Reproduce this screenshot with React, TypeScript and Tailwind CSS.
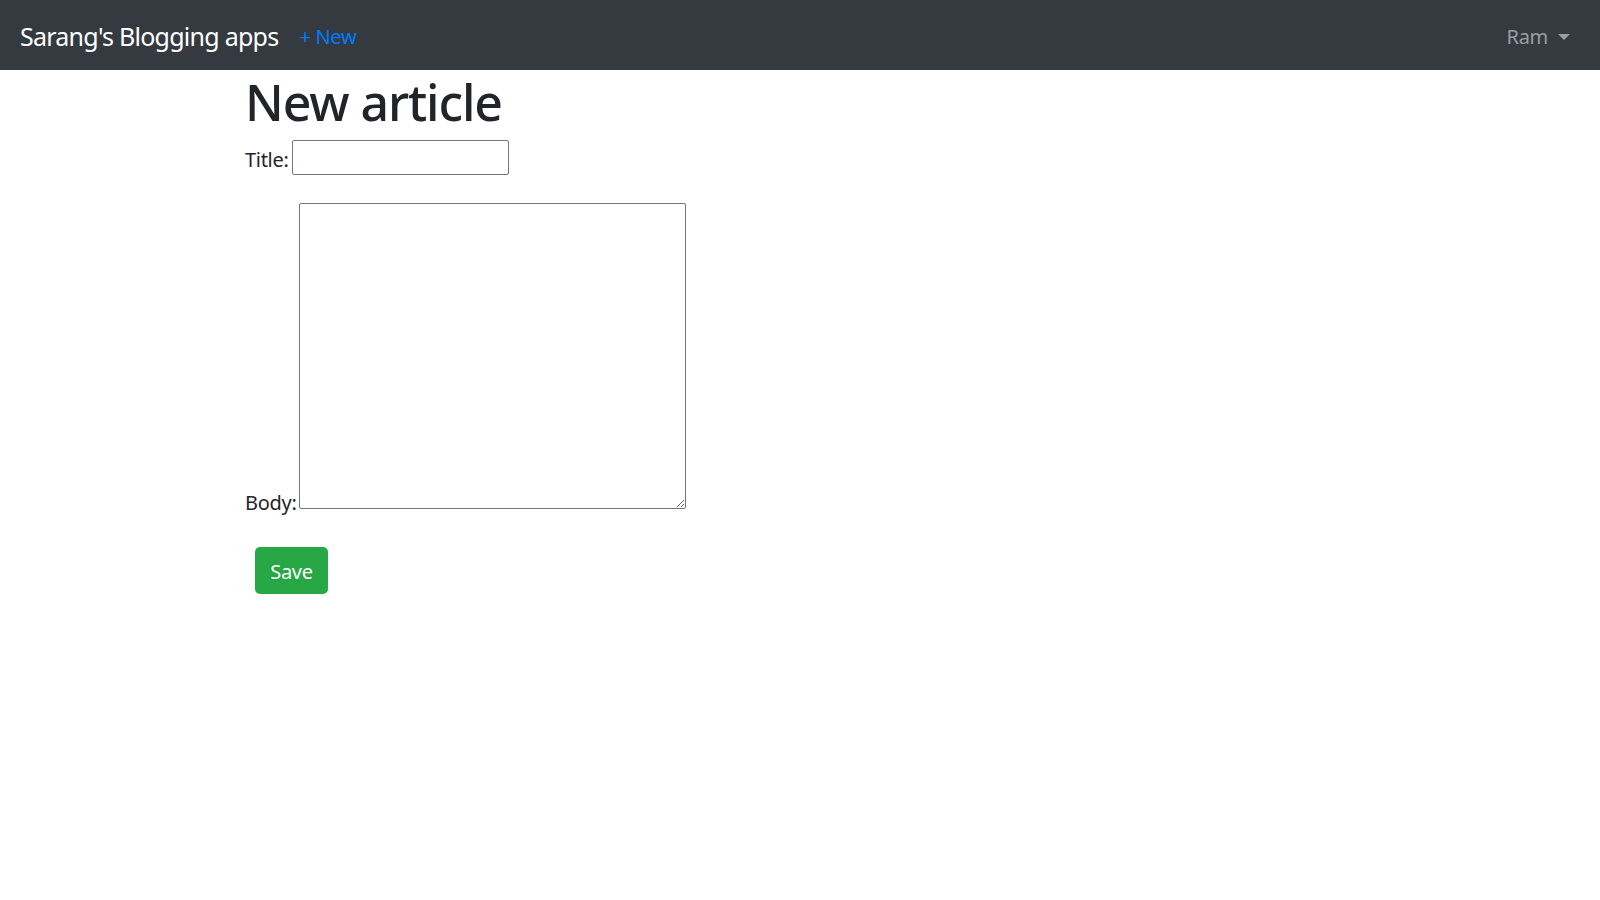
import React from "react"

const font = { fontFamily: '"Noto Sans", "Open Sans", sans-serif' }

function Navbar() {
  return (
    <nav className="flex h-[70px] items-center justify-between bg-[#343a40] pl-5 pr-[30px] pt-[3px]">
      <div className="flex items-center">
        <a className="text-[25px] tracking-[-0.75px] text-white" href="#">
          Sarang's Blogging apps
        </a>
        <a className="ml-[21px] text-[20px] tracking-[-0.3px] text-[#007bff]" href="#">
          + New
        </a>
      </div>
      <button className="flex items-center gap-[10px] text-[20px] tracking-[-0.3px] text-[#9a9da0]">
        Ram
        <span className="mt-[1px] h-0 w-0 border-x-[6px] border-t-[6px] border-x-transparent border-t-[#9a9da0]" />
      </button>
    </nav>
  )
}

export default function App() {
  return (
    <div className="min-h-screen bg-white text-[#212529]" style={font}>
      <Navbar />
      <main className="pl-[245px]">
        <h1 className="mt-[2px] text-[50px] font-medium leading-[1.2] tracking-[-1.1px]">New article</h1>
        <form className="flex flex-col items-start tracking-[-0.3px]">
          <div className="mt-[8px] flex items-end text-[20px]">
            <label htmlFor="title" className="mr-[3px] leading-[30px]">
              Title:
            </label>
            <input
              id="title"
              type="text"
              className="h-[35px] w-[217px] rounded-[2px] border border-[#767676] bg-white px-1"
            />
          </div>
          <div className="mt-[28px] flex items-end text-[20px]">
            <label htmlFor="body" className="mr-[3px] translate-y-[9px] leading-[30px]">
              Body:
            </label>
            <textarea
              id="body"
              className="h-[306px] w-[387px] rounded-[2px] border border-[#767676] bg-white"
            />
          </div>
          <button
            type="submit"
            className="ml-[10px] mt-[38px] h-[47px] w-[73px] rounded-[5px] bg-[#28a745] pt-[2px] text-[20px] text-white"
          >
            Save
          </button>
        </form>
      </main>
    </div>
  )
}
